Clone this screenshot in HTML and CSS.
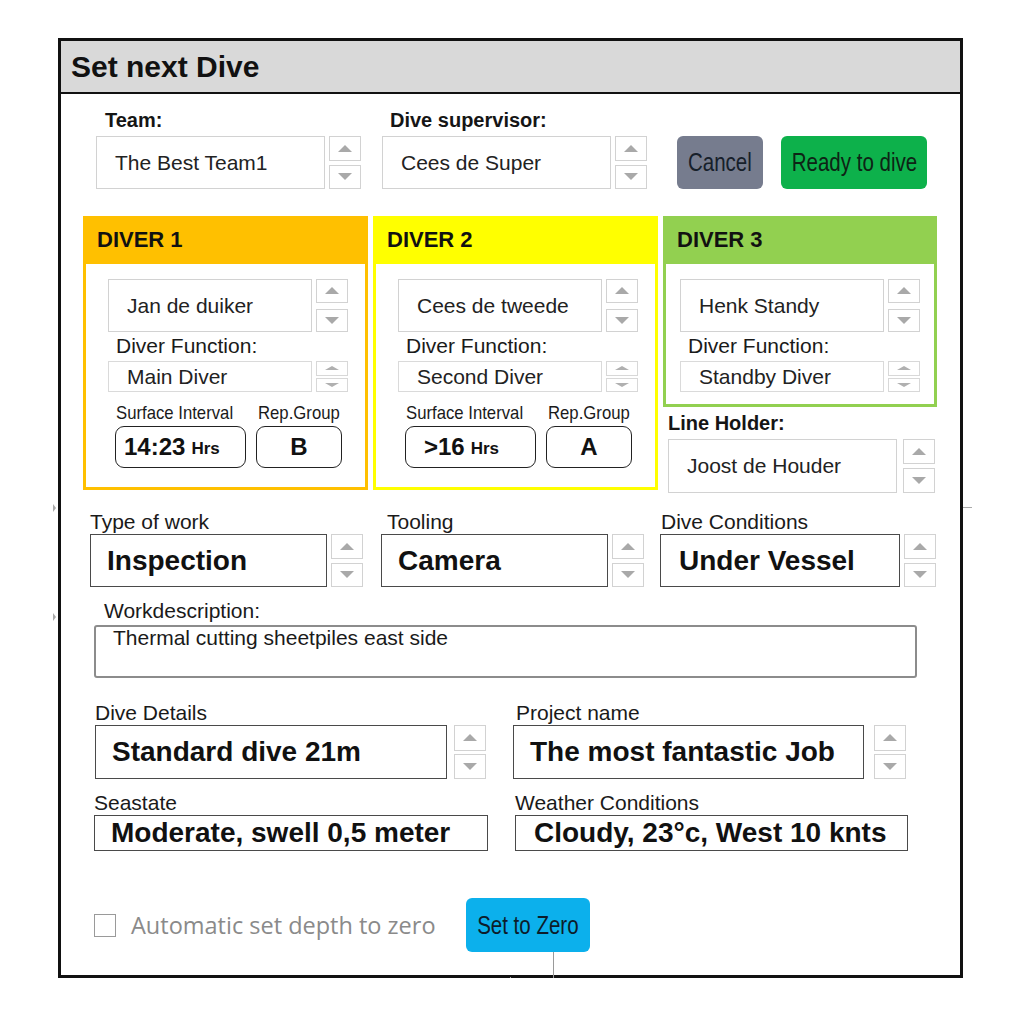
FILE: index.html
```html
<!DOCTYPE html>
<html>
<head>
<meta charset="utf-8">
<link rel="stylesheet" href="styles.css">
</head>
<body>
<div class="frame">
  <div class="titlebar">Set next Dive</div>

  <div class="top">
    <div class="group">
      <div class="blabel">Team:</div>
      <div class="inrow">
        <div class="input">The Best Team1</div>
        <div class="spin"><span class="sb"><i class="up"></i></span><span class="sb"><i class="dn"></i></span></div>
      </div>
    </div>
    <div class="group g-sup">
      <div class="blabel sup">Dive supervisor:</div>
      <div class="inrow">
        <div class="input">Cees de Super</div>
        <div class="spin"><span class="sb"><i class="up"></i></span><span class="sb"><i class="dn"></i></span></div>
      </div>
    </div>
    <div class="buttons">
      <div class="btn cancel"><span class="narrow">Cancel</span></div>
      <div class="btn ready"><span class="narrow">Ready to dive</span></div>
    </div>
  </div>

  <div class="divers">
    <div class="panel orange">
      <div class="phead">DIVER 1</div>
      <div class="pbody">
        <div class="inrow">
          <div class="input name">Jan de duiker</div>
          <div class="spin sm"><span class="sb"><i class="up"></i></span><span class="sb"><i class="dn"></i></span></div>
        </div>
        <div class="flabel">Diver Function:</div>
        <div class="inrow">
          <div class="input func">Main Diver</div>
          <div class="spin mini"><span class="mb"><i class="mup"></i></span><span class="mb"><i class="mdn"></i></span></div>
        </div>
        <div class="stats">
          <div class="scol c1">
            <div class="slabel"><span class="snarrow">Surface Interval</span></div>
            <div class="rbox p1">14:23 <small>Hrs</small></div>
          </div>
          <div class="scol c2">
            <div class="slabel"><span class="snarrow">Rep.Group</span></div>
            <div class="rbox ctr">B</div>
          </div>
        </div>
      </div>
    </div>

    <div class="panel yellow">
      <div class="phead">DIVER 2</div>
      <div class="pbody">
        <div class="inrow">
          <div class="input name">Cees de tweede</div>
          <div class="spin sm"><span class="sb"><i class="up"></i></span><span class="sb"><i class="dn"></i></span></div>
        </div>
        <div class="flabel">Diver Function:</div>
        <div class="inrow">
          <div class="input func">Second Diver</div>
          <div class="spin mini"><span class="mb"><i class="mup"></i></span><span class="mb"><i class="mdn"></i></span></div>
        </div>
        <div class="stats">
          <div class="scol c1">
            <div class="slabel"><span class="snarrow">Surface Interval</span></div>
            <div class="rbox p2">&gt;16 <small>Hrs</small></div>
          </div>
          <div class="scol c2">
            <div class="slabel"><span class="snarrow">Rep.Group</span></div>
            <div class="rbox ctr">A</div>
          </div>
        </div>
      </div>
    </div>

    <div class="col3">
      <div class="panel green">
        <div class="phead">DIVER 3</div>
        <div class="pbody">
          <div class="inrow">
            <div class="input name">Henk Standy</div>
            <div class="spin sm"><span class="sb"><i class="up"></i></span><span class="sb"><i class="dn"></i></span></div>
          </div>
          <div class="flabel">Diver Function:</div>
          <div class="inrow">
            <div class="input func">Standby Diver</div>
            <div class="spin mini"><span class="mb"><i class="mup"></i></span><span class="mb"><i class="mdn"></i></span></div>
          </div>
        </div>
      </div>
      <div class="blabel lh">Line Holder:</div>
      <div class="inrow wide">
        <div class="input lhin">Joost de Houder</div>
        <div class="spin"><span class="sb"><i class="up"></i></span><span class="sb"><i class="dn"></i></span></div>
      </div>
    </div>
  </div>

  <div class="row3">
    <div class="group">
      <div class="nlabel">Type of work</div>
      <div class="inrow">
        <div class="bbox w237">Inspection</div>
        <div class="spin"><span class="sb"><i class="up"></i></span><span class="sb"><i class="dn"></i></span></div>
      </div>
    </div>
    <div class="group g-tool">
      <div class="nlabel off6">Tooling</div>
      <div class="inrow">
        <div class="bbox w227">Camera</div>
        <div class="spin"><span class="sb"><i class="up"></i></span><span class="sb"><i class="dn"></i></span></div>
      </div>
    </div>
    <div class="group g-cond">
      <div class="nlabel off1">Dive Conditions</div>
      <div class="inrow">
        <div class="bbox w240 p19">Under Vessel</div>
        <div class="spin"><span class="sb"><i class="up"></i></span><span class="sb"><i class="dn"></i></span></div>
      </div>
    </div>
  </div>

  <div class="wdesc">
    <div class="nlabel wlabel">Workdescription:</div>
    <div class="wbox">Thermal cutting sheetpiles east side</div>
  </div>

  <div class="row5">
    <div class="group">
      <div class="nlabel">Dive Details</div>
      <div class="inrow g7">
        <div class="bbox w352 h54">Standard dive 21m</div>
        <div class="spin tall"><span class="sb"><i class="up"></i></span><span class="sb"><i class="dn"></i></span></div>
      </div>
    </div>
    <div class="group g-proj">
      <div class="nlabel off3">Project name</div>
      <div class="inrow g10">
        <div class="bbox w351 h54">The most fantastic Job</div>
        <div class="spin tall"><span class="sb"><i class="up"></i></span><span class="sb"><i class="dn"></i></span></div>
      </div>
    </div>
  </div>

  <div class="row6">
    <div class="group">
      <div class="nlabel">Seastate</div>
      <div class="bbox w394 h36">Moderate, swell 0,5 meter</div>
    </div>
    <div class="group g-weather">
      <div class="nlabel">Weather Conditions</div>
      <div class="bbox w393 h36 p18">Cloudy, 23°c, West 10 knts</div>
    </div>
  </div>

  <div class="row7">
    <div class="chk">
      <span class="box"></span>
      <span class="chktext">Automatic set depth to zero</span>
    </div>
    <div class="btn zero"><span class="narrow">Set to Zero</span></div>
  </div>

  <span class="mark m1"></span>
  <span class="mark m2"></span>
  <span class="rtick"></span>
  <span class="btick"></span>
</div>
</body>
</html>
```

FILE: styles.css
```css
body {
  margin: 0;
  background: #fff;
  font-family: "Liberation Sans", Arial, sans-serif;
  color: #151515;
}

.frame {
  position: relative;
  margin: 38px 0 0 58px;
  width: 905px;
  height: 940px;
  box-sizing: border-box;
  border: 3px solid #111;
}

.titlebar {
  height: 51px;
  background: #d9d9d9;
  border-bottom: 2px solid #111;
  padding-left: 10px;
  display: flex;
  align-items: center;
  font-weight: bold;
  font-size: 30px;
  color: #111;
}

/* generic */
.inrow { display: flex; gap: 4px; }
.group { display: flex; flex-direction: column; }

.blabel {
  font-weight: bold;
  font-size: 20px;
  line-height: 22px;
  margin: 0 0 5px 9px;
}
.blabel.sup { margin-left: 8px; }

.nlabel {
  font-size: 21px;
  line-height: 22px;
  margin-bottom: 1px;
  color: #1a1a1a;
}
.off6 { padding-left: 6px; }
.off1 { padding-left: 1px; }
.off3 { padding-left: 3px; }

.input {
  width: 229px;
  height: 53px;
  box-sizing: border-box;
  border: 1px solid #d2d2d2;
  display: flex;
  align-items: center;
  padding-left: 18px;
  font-size: 21px;
  color: #222;
  white-space: nowrap;
}

/* spinner */
.spin {
  display: flex;
  flex-direction: column;
  gap: 4px;
  width: 32px;
}
.sb {
  flex: 1;
  box-sizing: border-box;
  border: 1px solid #d2d2d2;
  display: flex;
  align-items: center;
  justify-content: center;
}
.up {
  width: 0; height: 0;
  border-left: 7px solid transparent;
  border-right: 7px solid transparent;
  border-bottom: 7px solid #a9a9a9;
}
.dn {
  width: 0; height: 0;
  border-left: 7px solid transparent;
  border-right: 7px solid transparent;
  border-top: 7px solid #a9a9a9;
}
.spin.sm { gap: 6px; }
.spin.tall { gap: 3px; }

.spin.mini { gap: 2px; }
.mb {
  flex: 1;
  box-sizing: border-box;
  border: 1px solid #d8d8d8;
  display: flex;
  align-items: center;
  justify-content: center;
}
.mup {
  width: 0; height: 0;
  border-left: 7px solid transparent;
  border-right: 7px solid transparent;
  border-bottom: 4px solid #b0b0b0;
}
.mdn {
  width: 0; height: 0;
  border-left: 7px solid transparent;
  border-right: 7px solid transparent;
  border-top: 4px solid #b0b0b0;
}

/* top row */
.top {
  display: flex;
  align-items: flex-start;
  padding: 15px 0 0 35px;
}
.g-sup { margin-left: 21px; }
.buttons {
  display: flex;
  gap: 18px;
  margin: 27px 0 0 30px;
}
.btn {
  height: 53px;
  border-radius: 6px;
  display: flex;
  align-items: center;
  justify-content: center;
  font-size: 25px;
  color: #16202a;
  white-space: nowrap;
  overflow: visible;
}
.narrow {
  display: inline-block;
  transform: scaleX(0.82);
  transform-origin: center;
}
.cancel { width: 86px; background: #767c8e; }
.ready { width: 146px; background: #0db14b; color: #0d2415; }

/* divers */
.divers {
  display: flex;
  align-items: flex-start;
  gap: 5px;
  margin-top: 27px;
  padding-left: 22px;
}
.panel {
  width: 285px;
  box-sizing: border-box;
  border: 3px solid;
  background: #fff;
}
.orange { border-color: #ffc000; }
.yellow { border-color: #ffff00; }
.green { border-color: #92d050; width: 274px; }
.orange .phead { background: #ffc000; }
.yellow .phead { background: #ffff00; }
.green .phead { background: #92d050; }
.phead {
  height: 45px;
  display: flex;
  align-items: center;
  padding: 0 0 3px 11px;
  box-sizing: border-box;
  font-weight: bold;
  font-size: 22px;
  color: #111;
}
.pbody { padding: 15px 17px 19px 22px; }
.green .pbody { padding: 15px 14px 12px 14px; }
.input.name, .input.func { width: 204px; }
.input.func { height: 31px; border-color: #dadada; }
.flabel {
  font-size: 21px;
  line-height: 22px;
  margin: 3px 0 4px 8px;
  color: #1a1a1a;
}
.stats {
  display: flex;
  gap: 10px;
  margin: 10px 0 0 7px;
}
.scol.c1 { width: 131px; }
.scol.c2 { width: 86px; }
.slabel {
  font-size: 19px;
  line-height: 22px;
  margin-bottom: 2px;
  padding-left: 1px;
  white-space: nowrap;
  color: #1a1a1a;
}
.snarrow {
  display: inline-block;
  transform: scaleX(0.88);
  transform-origin: left center;
}
.c2 .slabel { padding-left: 2px; }
.rbox {
  height: 42px;
  box-sizing: border-box;
  border: 1.5px solid #222;
  border-radius: 9px;
  display: flex;
  align-items: center;
  font-weight: bold;
  font-size: 24px;
  color: #111;
}
.rbox small { font-size: 17px; margin-left: 6px; margin-top: 3px; }
.rbox.p1 { padding-left: 8px; }
.rbox.p2 { padding-left: 18px; }
.rbox.ctr { justify-content: center; }

.col3 { display: flex; flex-direction: column; }
.blabel.lh { margin: 5px 0 5px 5px; }
.inrow.wide { gap: 6px; margin-left: 5px; }
.input.lhin { height: 54px; }

/* bold value boxes */
.bbox {
  height: 53px;
  box-sizing: border-box;
  border: 1.5px solid #4a4a4a;
  display: flex;
  align-items: center;
  padding-left: 16px;
  font-weight: bold;
  font-size: 28px;
  color: #111;
  white-space: nowrap;
}
.w237 { width: 237px; }
.w227 { width: 227px; }
.w240 { width: 240px; }
.w352 { width: 352px; }
.w351 { width: 351px; }
.w394 { width: 394px; }
.w393 { width: 393px; }
.h54 { height: 54px; }
.h36 { height: 36px; }
.p19 { padding-left: 18px; }
.p18 { padding-left: 18px; }

.row3 {
  display: flex;
  margin-top: 18px;
  padding-left: 29px;
}
.g-tool { margin-left: 18px; }
.g-cond { margin-left: 16px; }

.wdesc { margin-top: 13px; }
.wlabel { padding-left: 43px; margin-bottom: 3px; }
.wbox {
  margin-left: 33px;
  width: 823px;
  height: 53px;
  box-sizing: border-box;
  border: 2px solid #8c8c8c;
  border-radius: 3px;
  padding: 0 17px;
  font-size: 21px;
  line-height: 22px;
  color: #1a1a1a;
}

.row5 {
  display: flex;
  margin-top: 24px;
  padding-left: 34px;
}
.g7 { gap: 7px; }
.g10 { gap: 10px; }
.g-proj { margin-left: 27px; }

.row6 {
  display: flex;
  margin-top: 13px;
  padding-left: 33px;
}
.g-weather { margin-left: 27px; }

.row7 {
  display: flex;
  align-items: center;
  margin-top: 47px;
  padding-left: 33px;
}
.chk {
  width: 372px;
  display: flex;
  align-items: center;
}
.chk .box {
  width: 22px;
  height: 23px;
  box-sizing: border-box;
  border: 1.5px solid #9a9a9a;
}
.chktext {
  margin-left: 15px;
  font-family: "Open Sans", "Noto Sans", sans-serif;
  font-size: 23.5px;
  color: #8a8a8a;
  white-space: nowrap;
}
.zero {
  position: relative;
  width: 124px;
  height: 54px;
  background: #0cb0ec;
  font-size: 25px;
  color: #0d1c2a;
}
.zero::after {
  content: "";
  position: absolute;
  left: 87px;
  top: 54px;
  width: 1px;
  height: 34px;
  background: #9a9a9a;
}

/* stray marks */
.mark {
  position: absolute;
  left: -8px;
  width: 0; height: 0;
  border-top: 4px solid transparent;
  border-bottom: 4px solid transparent;
  border-left: 3px solid #aaa;
}
.m1 { top: 463px; }
.m2 { top: 572px; }
.rtick {
  position: absolute;
  left: 902px;
  top: 466px;
  width: 9px;
  height: 1px;
  background: #aaa;
}
.btick {
  position: absolute;
  left: 449px;
  top: 936px;
  width: 1px;
  height: 9px;
  background: #aaa;
}
```
